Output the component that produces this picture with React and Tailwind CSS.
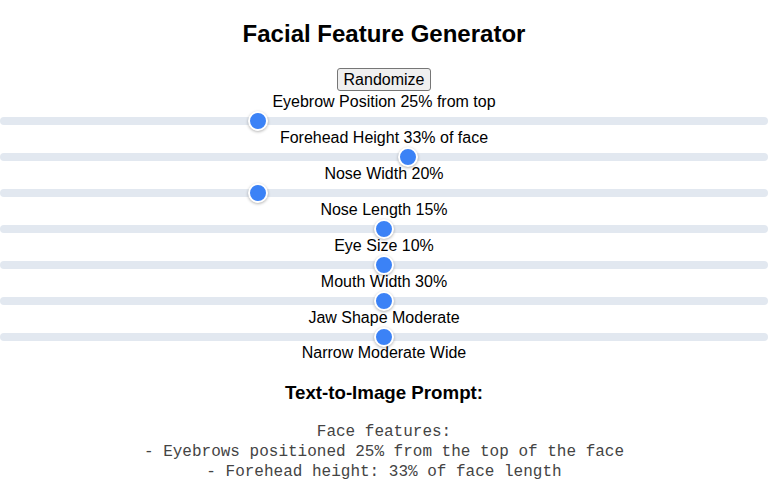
const sliders = [
  { label: "Eyebrow Position 25% from top", pos: 258 },
  { label: "Forehead Height 33% of face", pos: 408 },
  { label: "Nose Width 20%", pos: 258 },
  { label: "Nose Length 15%", pos: 384 },
  { label: "Eye Size 10%", pos: 384 },
  { label: "Mouth Width 30%", pos: 384 },
  { label: "Jaw Shape Moderate", pos: 384 },
];

// Slider visual: track plus thumb
const Slider = ({ pos }) => (
  <div className="relative h-4 flex items-center">
    <div className="w-full h-2 rounded-full bg-[#e2e8f0]"></div>
    <div
      className="absolute top-[-2px] w-5 h-5 -ml-[10px] rounded-full bg-[#3b82f6] border-2 border-white shadow-[0_1px_3px_rgba(0,0,0,0.3)]"
      style={{ left: pos }}
    ></div>
  </div>
);

const App = () => {
  return (
    <div className="w-[768px] h-[480px] overflow-hidden bg-white text-black text-center font-['Liberation_Sans',Arial,sans-serif] text-base">
      <h1 className="pt-[19px] text-2xl font-bold leading-[30px]">
        Facial Feature Generator
      </h1>
      <div className="mt-[19px] flex justify-center">
        <button className="h-[23px] px-[6px] leading-[19px] bg-[#efefef] border border-[#767676] rounded-[3px] text-base text-black">
          Randomize
        </button>
      </div>
      <div className="mt-[2px]">
        {sliders.map((s) => (
          <div key={s.label}>
            <div className="h-5 leading-[18px]">{s.label}</div>
            <Slider pos={s.pos} />
          </div>
        ))}
        <div className="h-5 leading-[16px]">Narrow Moderate Wide</div>
      </div>
      <h2 className="mt-[17px] text-[18.72px] font-bold leading-[22px]">
        Text-to-Image Prompt:
      </h2>
      <div className="mt-[18px] font-['Liberation_Mono','Courier_New',monospace] text-base leading-[20px] text-[#444] whitespace-pre">
        <div>Face features:</div>
        <div>- Eyebrows positioned 25% from the top of the face</div>
        <div>- Forehead height: 33% of face length</div>
      </div>
    </div>
  );
};

export default App;
